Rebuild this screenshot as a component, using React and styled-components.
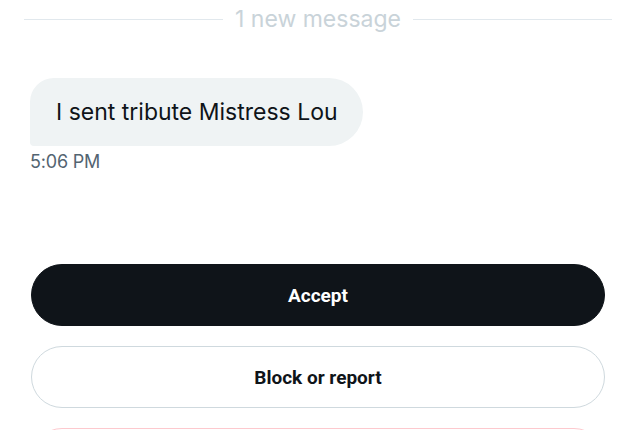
import React from 'react'
import styled, { createGlobalStyle } from 'styled-components'

const GlobalStyle = createGlobalStyle`
  html, body {
    margin: 0;
    padding: 0;
    background: #ffffff;
  }
  body {
    font-family: Inter, "Liberation Sans", Arial, sans-serif;
    color: #0f1419;
    overflow: hidden;
  }
`

function App() {
  return (
    <>
      <GlobalStyle />
      <Page>
        <Divider>
          <Line />
          <DividerText>1 new message</DividerText>
          <Line />
        </Divider>

        <Message>
          <Bubble>I sent tribute Mistress Lou</Bubble>
          <Time>5:06 PM</Time>
        </Message>

        <Actions>
          <Button $variant="primary">Accept</Button>
          <Button>Block or report</Button>
          {/* only the top edge of the delete button is on screen */}
          <Button $variant="danger" aria-label="Delete" />
        </Actions>
      </Page>
    </>
  )
}

export default App

const Page = styled.main`
  width: 636px;
  height: 430px;
  overflow: hidden;
  box-sizing: border-box;
  padding: 5px 30px 0 30px;
`

const Divider = styled.div`
  display: flex;
  align-items: center;
  gap: 12px;
  margin: 0 -6px;
  height: 28px;
`

const Line = styled.div`
  flex: 1;
  height: 1px;
  background: #e1e8ed;
`

const DividerText = styled.span`
  font-size: 23px;
  color: #c9d3d9;
`

const Message = styled.div`
  display: flex;
  flex-direction: column;
  align-items: flex-start;
  margin-top: 45px;
`

const Bubble = styled.div`
  background: #eff3f4;
  border-radius: 24px 34px 34px 4px;
  height: 68px;
  box-sizing: border-box;
  padding: 0 25px 0 26px;
  display: flex;
  align-items: center;
  font-size: 23px;
  color: #0f1419;
`

const Time = styled.div`
  margin-top: 5px;
  font-size: 18px;
  color: #536471;
  letter-spacing: -0.2px;
`

const Actions = styled.div`
  display: flex;
  flex-direction: column;
  gap: 20px;
  margin-top: 92px;
  padding-left: 1px;
  padding-right: 1px;
`

const Button = styled.div`
  height: 62px;
  box-sizing: border-box;
  border-radius: 31px;
  display: flex;
  align-items: center;
  justify-content: center;
  font-family: Roboto, "Liberation Sans", Arial, sans-serif;
  font-size: 19px;
  font-weight: 700;
  flex-shrink: 0;
  background: ${p => (p.$variant === 'primary' ? '#0f1419' : '#ffffff')};
  color: ${p =>
    p.$variant === 'primary' ? '#ffffff' : p.$variant === 'danger' ? '#f4212e' : '#0f1419'};
  border: 1px solid
    ${p =>
      p.$variant === 'primary' ? '#0f1419' : p.$variant === 'danger' ? '#fdc9ce' : '#cfd9de'};
`
